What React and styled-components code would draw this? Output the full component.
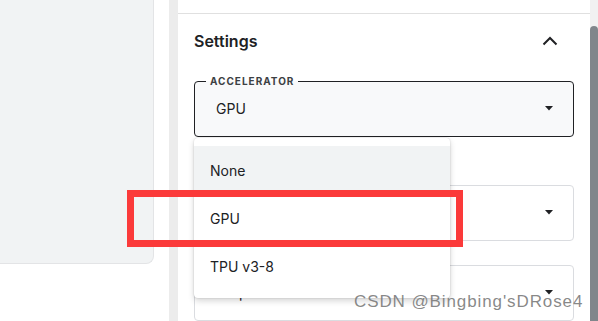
import styled, { createGlobalStyle } from 'styled-components';

const GlobalStyle = createGlobalStyle`
  html, body {
    margin: 0;
    background: #fff;
    font-family: Inter, "Noto Sans", sans-serif;
    color: #202124;
  }
`;

const fields = [
  { label: 'Accelerator', value: 'GPU', active: true },
  { label: 'Language', value: 'Python' },
  { label: 'Persistence', value: 'No persistence' },
];

const options = ['None', 'GPU', 'TPU v3-8'];

function ChevronUp() {
  return (
    <svg width="16" height="10" viewBox="0 0 16 10">
      <polyline points="1.5,8.5 8,2 14.5,8.5" fill="none" stroke="#202124" strokeWidth="2" />
    </svg>
  );
}

function ArrowDrop() {
  return (
    <svg width="8" height="5" viewBox="0 0 8 5">
      <polygon points="0,0 8,0 4,4.5" fill="#202124" />
    </svg>
  );
}

export default function App() {
  return (
    <>
      <GlobalStyle />
      <Page>
        <EditorPane />
        <Gutter />
        <Splitter />
        <SidePanel>
          <TopSpacer />
          <Section>
            <Header>
              <Title>Settings</Title>
              <ChevronUp />
            </Header>
            {fields.map((f, i) => (
              <FieldWrap key={f.label} $index={i}>
                <Field $active={f.active}>
                  <Legend>{f.label}</Legend>
                  <Value>
                    <span>{f.value}</span>
                    <ArrowDrop />
                  </Value>
                </Field>
                {f.active && (
                  <Menu>
                    {options.map((o) => (
                      <MenuItem key={o} $highlighted={o === 'None'}>
                        {o}
                      </MenuItem>
                    ))}
                  </Menu>
                )}
              </FieldWrap>
            ))}
          </Section>
        </SidePanel>
        <ScrollTrack>
          <Thumb />
        </ScrollTrack>
        <Highlight />
        <Watermark>CSDN @Bingbing'sDRose4</Watermark>
      </Page>
    </>
  );
}

const Page = styled.div`
  position: relative;
  display: flex;
  height: 321px;
  overflow: hidden;
`;

const EditorPane = styled.div`
  width: 154px;
  height: 264px;
  flex-shrink: 0;
  box-sizing: border-box;
  background: #f1f3f4;
  border-right: 1px solid #e3e4e6;
  border-bottom: 1px solid #e3e4e6;
  border-bottom-right-radius: 8px;
`;

const Gutter = styled.div`
  width: 15px;
  flex-shrink: 0;
`;

const Splitter = styled.div`
  width: 9px;
  flex-shrink: 0;
  background: #ececec;
`;

const SidePanel = styled.div`
  flex: 1;
  display: flex;
  flex-direction: column;
`;

const TopSpacer = styled.div`
  height: 13px;
`;

const Section = styled.div`
  border-top: 1px solid #e0e0e0;
  padding: 0 16px;
`;

const Header = styled.div`
  height: 54px;
  display: flex;
  align-items: center;
  justify-content: space-between;
  padding-right: 16px;
`;

const Title = styled.h2`
  margin: 0;
  font-size: 16px;
  font-weight: 600;
`;

const FieldWrap = styled.div`
  position: relative;
  margin-top: ${(p) => [8, 43, 19][p.$index]}px;
`;

const Field = styled.fieldset`
  margin: 0;
  padding: 0 20px 0 11px;
  border: 1px solid ${(p) => (p.$active ? '#202124' : '#dadce0')};
  border-radius: 4px;
  background: ${(p) => (p.$active ? '#f8f9fa' : '#fff')};
  min-width: 0;
`;

const Legend = styled.legend`
  padding: 0 4px;
  font-size: 10px;
  line-height: 10px;
  font-weight: 700;
  letter-spacing: 1px;
  text-transform: uppercase;
  color: #3c4043;
`;

const Value = styled.div`
  height: 44px;
  margin-bottom: 6px;
  padding-left: 10px;
  display: flex;
  align-items: center;
  justify-content: space-between;
  font-size: 14px;
`;

const Menu = styled.div`
  position: absolute;
  top: calc(100% + 1px);
  left: 0;
  width: 256px;
  padding: 8px 0;
  background: #fff;
  border-radius: 4px;
  box-shadow: 0 3px 6px rgba(0, 0, 0, 0.16), 0 0 2px rgba(0, 0, 0, 0.18);
  z-index: 2;
`;

const MenuItem = styled.div`
  height: 48px;
  padding: 0 16px;
  display: flex;
  align-items: center;
  font-size: 14px;
  background: ${(p) => (p.$highlighted ? '#f1f3f4' : 'transparent')};
`;

const ScrollTrack = styled.div`
  width: 8px;
  flex-shrink: 0;
  display: flex;
  flex-direction: column;
  padding-top: 26px;
  box-sizing: border-box;
  background: #f1f1f1;
`;

const Thumb = styled.div`
  flex: 1;
  background: #80868b;
  border-radius: 4px 4px 0 0;
`;

const Highlight = styled.div`
  position: absolute;
  left: 127px;
  top: 190px;
  width: 336px;
  height: 57px;
  box-sizing: border-box;
  border: 7px solid #fb3a3a;
  z-index: 3;
`;

const Watermark = styled.div`
  position: absolute;
  left: 354px;
  top: 293px;
  font-family: "Liberation Sans", Arial, sans-serif;
  font-size: 17px;
  line-height: 17px;
  letter-spacing: 0.9px;
  color: rgba(115, 115, 115, 0.85);
  white-space: nowrap;
  z-index: 4;
`;
